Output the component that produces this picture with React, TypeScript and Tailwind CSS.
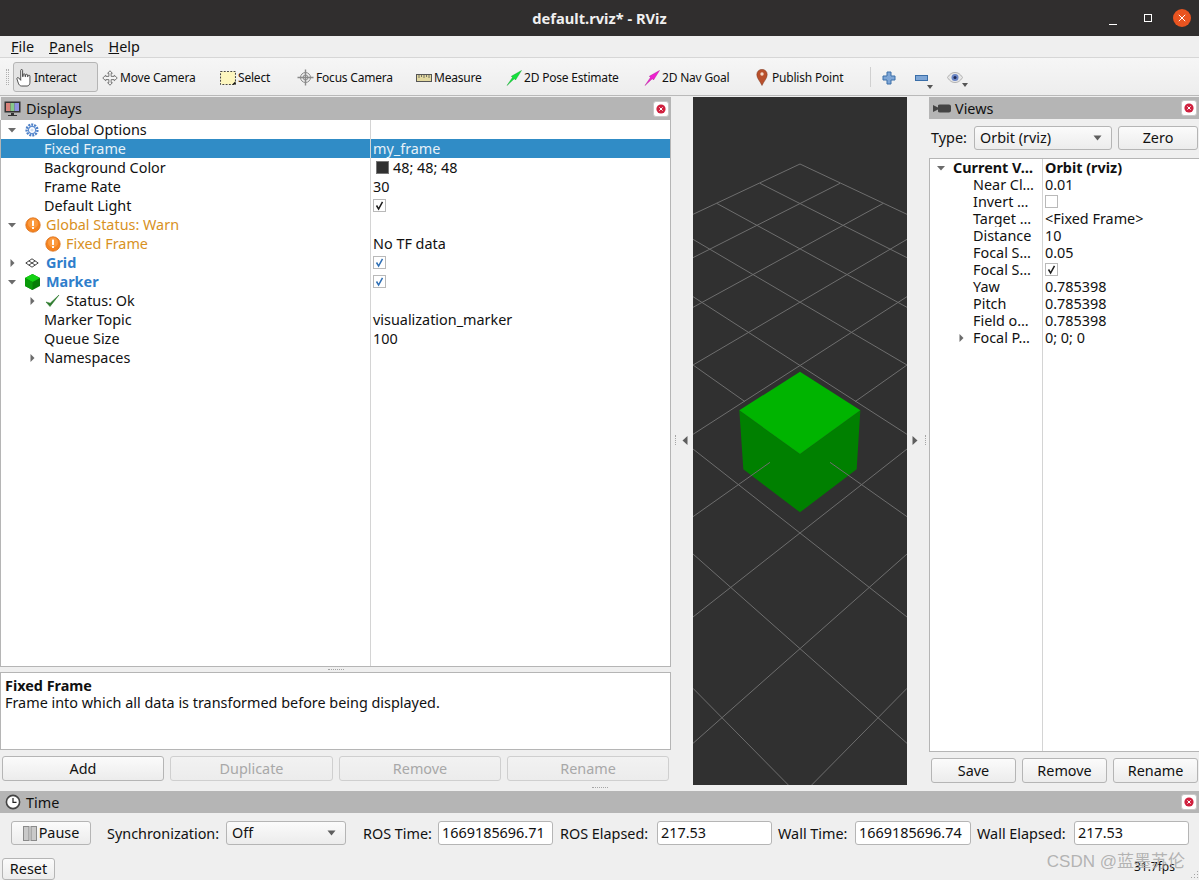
import React from 'react'

const FONT = 'font-["Noto_Sans","Open_Sans",sans-serif]'

// rviz style tree rows
type Row = {
  label: string
  level?: 0 | 1
  arrow?: 'down' | 'right'
  icon?: React.ReactNode
  tone?: 'warn' | 'link' | 'selected' | 'bold'
  value?: React.ReactNode
}

const Arrow = ({ dir }: { dir: 'down' | 'right' }) => (
  <svg width="10" height="10" viewBox="0 0 10 10" className="shrink-0">
    {dir === 'down' ? <path d="M1 3h8L5 7.5z" fill="#6b6b6b" /> : <path d="M3.5 1v8L7.5 5z" fill="#6b6b6b" />}
  </svg>
)

const Check = ({ on = true, blue = false }: { on?: boolean; blue?: boolean }) => (
  <span className="flex h-[13px] w-[13px] items-center justify-center border border-[#b9b9b9] bg-white">
    {on && (
      <svg width="11" height="11" viewBox="0 0 11 11">
        <path d="M2.5 5.5 4.6 9 8.5 1.8" fill="none" stroke={blue ? '#2f6fb5' : '#1c1c1c'} strokeWidth="1.5" />
      </svg>
    )}
  </span>
)

const GearIcon = () => (
  <svg width="14" height="14" viewBox="0 0 14 14">
    <circle cx="7" cy="7" r="5.4" fill="none" stroke="#4f81c7" strokeWidth="2.4" strokeDasharray="2 1" />
    <circle cx="7" cy="7" r="3.6" fill="none" stroke="#5f8fd2" strokeWidth="1.2" />
    <circle cx="7" cy="7" r="1.6" fill="#cfdcf2" />
  </svg>
)

const WarnIcon = () => (
  <svg width="16" height="16" viewBox="0 0 16 16">
    <circle cx="8" cy="8" r="7.2" fill="#f5831f" stroke="#d9701a" strokeWidth="0.8" />
    <circle cx="8" cy="6.5" r="5" fill="#fb9a3f" />
    <rect x="7" y="3.4" width="2" height="5.6" rx="0.6" fill="#fff" />
    <rect x="7" y="10" width="2" height="2" rx="0.5" fill="#fff" />
  </svg>
)

const GridIcon = () => (
  <svg width="14" height="10" viewBox="0 0 14 10">
    <path d="M7 .8 13.2 5 7 9.2.8 5zM3.9 2.9l6.2 4.2M10.1 2.9 3.9 7.1" fill="none" stroke="#444" strokeWidth="1" />
  </svg>
)

const CubeIcon = () => (
  <svg width="15" height="16" viewBox="0 0 15 16">
    <path d="M7.5 0 15 4v8l-7.5 4L0 12V4z" fill="#067d06" />
    <path d="M7.5 0 15 4 7.5 8 0 4z" fill="#14d214" />
    <path d="M0 4 7.5 8v8L0 12z" fill="#0a9a0a" />
  </svg>
)

const OkIcon = () => (
  <svg width="15" height="14" viewBox="0 0 15 14">
    <path d="M1 8 5 12.5 14 1 5.2 9.2z" fill="#2c7a2c" stroke="#2c7a2c" strokeWidth="0.6" />
  </svg>
)

const CloseBtn = () => (
  <button className="flex h-[16px] w-[16px] items-center justify-center rounded-[3px] border border-[#c9c9c9] bg-white">
    <svg width="10" height="10" viewBox="0 0 10 10">
      <circle cx="5" cy="5" r="4.6" fill="#d0213f" />
      <path d="M3.4 3.4l3.2 3.2M6.6 3.4 3.4 6.6" stroke="#fff" strokeWidth="1" />
    </svg>
  </button>
)

const PanelTitle = ({
  icon,
  title,
  className,
  iconClass = 'w-[26px]',
  titleClass = '',
}: {
  icon: React.ReactNode
  title: string
  className: string
  iconClass?: string
  titleClass?: string
}) => (
  <div className={`flex shrink-0 items-center bg-[#b5b5b5] text-[#111] ${className}`}>
    <span className={`flex shrink-0 items-center justify-center ${iconClass}`}>{icon}</span>
    <span className={`flex-1 text-[14.4px] ${titleClass}`}>{title}</span>
    <span className="mr-[2px]"><CloseBtn /></span>
  </div>
)

const Btn = ({ children, className, disabled }: { children: React.ReactNode; className: string; disabled?: boolean }) => (
  <button
    className={`flex items-center justify-center rounded-[3px] border bg-gradient-to-b text-[14.4px] ${
      disabled
        ? 'border-[#cfcfcf] from-[#f2f2f2] to-[#ececec] text-[#a8a8a8]'
        : 'border-[#b5b5b5] from-[#fbfbfb] to-[#ececec] text-[#111]'
    } ${className}`}
  >
    {children}
  </button>
)

const Combo = ({ text, className }: { text: string; className: string }) => (
  <div className={`flex items-center justify-between rounded-[3px] border border-[#b5b5b5] bg-gradient-to-b from-[#fbfbfb] to-[#ececec] pl-[5px] pr-[9px] text-[14.4px] text-[#111] ${className}`}>
    <span>{text}</span>
    <svg width="9" height="6" viewBox="0 0 9 6"><path d="M.5.5h8L4.500 5.500z" fill="#5e5e5e" /></svg>
  </div>
)

const TimeField = ({ value, className }: { value: string; className: string }) => (
  <div className={`flex h-[24px] items-center rounded-[3px] border border-[#b5b5b5] bg-white pl-[3px] text-[14.4px] text-[#111] ${className}`}>{value}</div>
)

const Tree = ({ rows, rowClass, leftClass }: { rows: Row[]; rowClass: string; leftClass: string }) => (
  <div className="flex h-full flex-col">
    {rows.map((r) => {
      const selected = r.tone === 'selected'
      const labelClass =
        r.tone === 'warn'
          ? 'text-[#d8911e]'
          : r.tone === 'link'
            ? 'font-bold text-[#2f7ecb]'
            : r.tone === 'bold'
              ? 'font-bold text-[#111]'
              : selected
                ? 'text-[#e6f1f8]'
                : 'text-[#111]'
      return (
        <div key={r.label + (r.value ? 'v' : '')} className={`flex shrink-0 items-center text-[14.4px] ${rowClass} ${selected ? 'bg-[#308cc6]' : ''}`}>
          <div className={`flex h-full shrink-0 items-center overflow-hidden whitespace-nowrap ${leftClass} ${r.level === 1 ? 'pl-[20px]' : ''}`}>
            <span className="flex w-[23px] shrink-0 items-center pl-[6px]">{r.arrow && <Arrow dir={r.arrow} />}</span>
            {r.icon && <span className="flex w-[22px] shrink-0 items-center pl-px">{r.icon}</span>}
            <span className={labelClass}>{r.label}</span>
          </div>
          <div className={`flex h-full flex-1 items-center whitespace-nowrap border-l border-[#d4d4d4] pl-[2px] ${r.tone === 'bold' ? 'font-bold text-[#111]' : selected ? 'text-[#e6f1f8]' : 'text-[#111]'}`}>
            {r.value}
          </div>
        </div>
      )
    })}
    {/* column line carries on below the last row */}
    <div className="flex flex-1">
      <div className={`shrink-0 ${leftClass}`} />
      <div className="flex-1 border-l border-[#d4d4d4]" />
    </div>
  </div>
)

const displayRows: Row[] = [
  { label: 'Global Options', arrow: 'down', icon: <GearIcon /> },
  { label: 'Fixed Frame', level: 1, tone: 'selected', value: 'my_frame' },
  {
    label: 'Background Color',
    level: 1,
    value: (
      <span className="flex items-center gap-[4px] pl-[3px]">
        <span className="h-[13px] w-[13px] border border-[#777] bg-[#303030]" />
        48; 48; 48
      </span>
    ),
  },
  { label: 'Frame Rate', level: 1, value: '30' },
  { label: 'Default Light', level: 1, value: <Check /> },
  { label: 'Global Status: Warn', arrow: 'down', icon: <WarnIcon />, tone: 'warn' },
  { label: 'Fixed Frame', level: 1, icon: <WarnIcon />, tone: 'warn', value: 'No TF data' },
  { label: 'Grid', arrow: 'right', icon: <GridIcon />, tone: 'link', value: <Check blue /> },
  { label: 'Marker', arrow: 'down', icon: <CubeIcon />, tone: 'link', value: <Check blue /> },
  { label: 'Status: Ok', level: 1, arrow: 'right', icon: <OkIcon /> },
  { label: 'Marker Topic', level: 1, value: 'visualization_marker' },
  { label: 'Queue Size', level: 1, value: '100' },
  { label: 'Namespaces', level: 1, arrow: 'right' },
]

const viewRows: Row[] = [
  { label: 'Current V…', arrow: 'down', tone: 'bold', value: 'Orbit (rviz)' },
  { label: 'Near Cl…', level: 1, value: '0.01' },
  { label: 'Invert …', level: 1, value: <Check on={false} /> },
  { label: 'Target …', level: 1, value: '<Fixed Frame>' },
  { label: 'Distance', level: 1, value: '10' },
  { label: 'Focal S…', level: 1, value: '0.05' },
  { label: 'Focal S… ', level: 1, value: <Check /> },
  { label: 'Yaw', level: 1, value: '0.785398' },
  { label: 'Pitch', level: 1, value: '0.785398' },
  { label: 'Field o…', level: 1, value: '0.785398' },
  { label: 'Focal P…', level: 1, arrow: 'right', value: '0; 0; 0' },
]

// floor grid, coords are 3x the viewport pixels
const gridLines = [
  [390, 207, 69, 358],
  [510, 265, 69, 488],
  [640, 325, 69, 637],
  [711, 433, 69, 810],
  [711, 605, 69, 1018],
  [711, 810, 555, 920],
  [300, 1102, 69, 1265],
  [711, 1062, 69, 1566],
  [711, 1377, 69, 1945],
  [711, 1780, 425, 2070],
]

const Viewport = () => (
  <div className="h-[688px] w-[214px] shrink-0 bg-[#303030]">
    <svg width="214" height="688" viewBox="69 6 642 2064" className="block">
      <path d="M208 946 390 1077 571 946 560 1123 390 1252 220 1123z" fill="#008000" />
      <path d="M390 830 571 946 390 1077 208 946z" fill="#00b400" />
      {gridLines.map(([a, b, c, d]) => (
        <g key={`${a}-${b}`} stroke="#6e6e6e" strokeWidth="3">
          <line x1={a} y1={b} x2={c} y2={d} />
          <line x1={780 - a} y1={b} x2={780 - c} y2={d} />
        </g>
      ))}
    </svg>
  </div>
)

const tools: { label: string; icon: React.ReactNode; className: string }[] = [
  {
    label: 'Move Camera',
    className: 'w-[118px]',
    icon: (
      <svg width="16" height="16" viewBox="0 0 17 17" fill="#f4f4f4" stroke="#6f6f6f">
        <path d="M8.500 .8 11 3.500H9.700v3.300h3.300V5.500l3.200 3-3.200 3V10.200H9.700v3.300H11l-2.500 2.700L6 13.500h1.300v-3.300H4v1.300L.8 8.500 4 5.500v1.300h3.300V3.500H6z" />
      </svg>
    ),
  },
  {
    label: 'Select',
    className: 'w-[77px]',
    icon: (
      <svg width="16" height="14" viewBox="0 0 17 15">
        <rect x=".5" y=".5" width="16" height="14" fill="#fdf6bf" stroke="#333" strokeDasharray="2 1.500" />
        <path d="M13 14.500 16.500 11v3.500z" fill="#111" />
      </svg>
    ),
  },
  {
    label: 'Focus Camera',
    className: 'w-[119px]',
    icon: (
      <svg width="17" height="17" viewBox="0 0 17 17" fill="none" stroke="#8a8a8a">
        <circle cx="8.500" cy="8.500" r="5" fill="#ededed" />
        <circle cx="8.500" cy="8.500" r="2.500" />
        <path d="M8.500 .5v16M.5 8.500h16" strokeWidth="1.400" />
      </svg>
    ),
  },
  {
    label: 'Measure',
    className: 'w-[90px]',
    icon: (
      <svg width="16" height="8" viewBox="0 0 16 8">
        <rect x=".5" y=".5" width="15" height="7" fill="#e3d9a0" stroke="#555" />
        <path d="M3 1v3M5.500 1v2M8 1v3M10.500 1v2M13 1v3" stroke="#555" strokeWidth="0.8" />
      </svg>
    ),
  },
  {
    label: '2D Pose Estimate',
    className: 'w-[138px]',
    icon: (
      <svg width="16" height="16" viewBox="0 0 16 16">
        <path d="M15.500 .5 9.500 10l-1.200-1.300L1 15.500 6.500 7.400 5.300 6.300z" fill="#14e23c" stroke="#0f9a2c" strokeWidth="0.4" />
      </svg>
    ),
  },
  {
    label: '2D Nav Goal',
    className: 'w-[111px]',
    icon: (
      <svg width="16" height="16" viewBox="0 0 16 16">
        <path d="M15.500 .5 9.500 10l-1.200-1.300L1 15.500 6.500 7.400 5.300 6.300z" fill="#f01fd0" stroke="#a8128f" strokeWidth="0.4" />
      </svg>
    ),
  },
  {
    label: 'Publish Point',
    className: 'w-[115px]',
    icon: (
      <svg width="12" height="17" viewBox="0 0 12 17" className="ml-px mr-[2px]">
        <path d="M6 16.500C4 12 .8 9.500.8 5.500a5.200 5.200 0 0 1 10.400 0C11.200 9.500 8 12 6 16.500z" fill="#b9502c" stroke="#7d3a22" strokeWidth="0.5" />
        <circle cx="6" cy="5" r="1.700" fill="#f3d9c9" />
      </svg>
    ),
  },
]

export default function App() {
  return (
    <div className={`relative flex h-[880px] w-[1199px] flex-col overflow-hidden bg-[#efefef] ${FONT}`}>
      {/* Title bar */}
      <div className="relative flex h-[36px] shrink-0 items-center justify-center bg-[#302e2e] text-[14.67px] font-bold text-[#f0f0f0]">
        default.rviz* - RViz
        <div className="absolute right-[8px] top-[9px] flex items-center">
          <span className="mr-[27px] mt-[12px] h-[1px] w-[8px] bg-white" />
          <span className="mr-[21px] h-[8px] w-[8px] border border-white" />
          <span className="flex h-[18px] w-[18px] items-center justify-center rounded-full bg-[#e95420]">
            <svg width="8" height="8" viewBox="0 0 8 8"><path d="M.8.8l6.400 6.400M7.200.8.800 7.200" stroke="#fff" strokeWidth="1" /></svg>
          </span>
        </div>
      </div>

      {/* Menu */}
      <div className="flex h-[22px] shrink-0 items-center gap-[15px] border-b border-[#d6d6d6] pl-[11px] text-[14.4px] text-[#111]">
        <span><u>F</u>ile</span>
        <span><u>P</u>anels</span>
        <span><u>H</u>elp</span>
      </div>

      {/* Toolbar */}
      <div className="flex h-[38px] shrink-0 items-center border-b border-[#b9b9b9] bg-gradient-to-b from-[#f6f6f6] to-[#ededed] text-[12px] tracking-[-0.2px] text-[#111]">
        <span className="ml-[6px] mr-[4px] h-[16px] w-[3px] border-x border-dotted border-[#b0b0b0]" />
        <div className="flex h-[30px] w-[85px] items-center gap-[2px] rounded-[3px] border border-[#b5b5b5] bg-[#e4e4e4] pl-[2px]">
          <svg width="16" height="18" viewBox="0 0 17 19" fill="#fff" stroke="#333" strokeWidth="0.9" className="mt-[2px]">
            <path d="M5 1.500a1 1 0 0 1 2 0V8h.6V6a1 1 0 0 1 2 0v2h.6V6.500a1 1 0 0 1 2 0V8h.6V7.500a1 1 0 0 1 2 0V14c0 2-1 4-3 4H6c-2 0-3-1.500-3.500-3L1 10.500c-.3-1.400 1-2 2-1L5 12z" />
          </svg>
          <span className="mt-[2px]">Interact</span>
        </div>
        <div className="ml-[4px] mt-[2px] flex items-center">
          {tools.map((t) => (
            <div key={t.label} className={`flex items-center gap-[2px] ${t.className}`}>
              {t.icon}
              <span className="whitespace-nowrap">{t.label}</span>
            </div>
          ))}
        </div>
        <span className="h-[20px] w-px bg-[#d0d0d0]" />
        <div className="ml-[11px] mt-[2px] flex items-center">
          <svg width="14" height="14" viewBox="0 0 14 14" className="mr-[19px]">
            <path d="M5 1h4v4h4v4H9v4H5V9H1V5h4z" fill="#7ea6d6" stroke="#3a6ea8" />
          </svg>
          <span className="relative mr-[19px]">
            <svg width="13" height="6" viewBox="0 0 13 6" className="block"><rect x=".5" y=".5" width="12" height="5" fill="#7ea6d6" stroke="#3a6ea8" /></svg>
            <svg width="6" height="4" viewBox="0 0 6 4" className="absolute -right-[5px] top-[10px]"><path d="M0 0h6L3 4z" fill="#555" /></svg>
          </span>
          <span className="relative">
            <svg width="16" height="11" viewBox="0 0 16 11" className="block">
              <path d="M.5 5.500C3 1.500 5.500.5 8 .5s5 1 7.500 5c-2.500 4-5 5-7.500 5s-5-1-7.500-5z" fill="#e6e6e6" stroke="#b0b0b0" />
              <circle cx="8" cy="5.500" r="3.500" fill="#6b86c6" />
              <circle cx="8" cy="5.500" r="1.500" fill="#1f2a55" />
            </svg>
            <svg width="6" height="4" viewBox="0 0 6 4" className="absolute -right-[5px] top-[11px]"><path d="M0 0h6L3 4z" fill="#555" /></svg>
          </span>
        </div>
      </div>

      {/* Main area */}
      <div className="relative mt-px flex h-[694px] shrink-0">
        {/* Displays */}
        <div className="flex w-[671px] shrink-0 flex-col">
          <PanelTitle
            className="ml-px h-[23px]"
            iconClass="w-[25px]"
            title="Displays"
            icon={
              <svg width="17" height="16" viewBox="0 0 17 16" className="-ml-[3px]">
                <rect x=".5" y=".5" width="16" height="11" fill="#333" />
                <rect x="2" y="2" width="4.500" height="8" fill="#d9827a" />
                <rect x="6.500" y="2" width="4" height="8" fill="#86c98a" />
                <rect x="10.500" y="2" width="4.500" height="8" fill="#8f93e0" />
                <path d="M7 12h3v2h3v1H4v-1h3z" fill="#333" />
              </svg>
            }
          />
          <div className="h-[547px] shrink-0 border border-t-0 border-[#b5b5b5] bg-white">
            <Tree rows={displayRows} rowClass="h-[19px]" leftClass="w-[369px]" />
          </div>
          <div className="flex h-[5px] shrink-0 items-center justify-center">
            <span className="h-px w-[16px] border-t border-dotted border-[#a5a5a5]" />
          </div>
          <div className="h-[78px] shrink-0 border border-[#b5b5b5] bg-white pl-[4px] pt-[4px] text-[14.4px] leading-[17px] text-[#111]">
            <div className="font-bold">Fixed Frame</div>
            <div>Frame into which all data is transformed before being displayed.</div>
          </div>
          <div className="mt-[6px] flex gap-[6px] pl-[2px]">
            <Btn className="h-[25px] w-[162px]">Add</Btn>
            <Btn disabled className="h-[25px] w-[163px]">Duplicate</Btn>
            <Btn disabled className="h-[25px] w-[162px]">Remove</Btn>
            <Btn disabled className="h-[25px] w-[162px]">Rename</Btn>
          </div>
        </div>

        {/* Middle with viewport */}
        <div className="flex w-[22px] shrink-0 items-center justify-between pb-[8px] pl-[4px] pr-[5px]">
          <span className="h-[10px] w-px border-l border-dotted border-[#a5a5a5]" />
          <svg width="6" height="9" viewBox="0 0 6 9"><path d="M5.500 0v9L.5 4.500z" fill="#5e5e5e" /></svg>
        </div>
        <Viewport />
        <div className="flex w-[22px] shrink-0 items-center justify-between pb-[8px] pl-[5px] pr-[3px]">
          <svg width="6" height="9" viewBox="0 0 6 9"><path d="M.5 0v9l5-4.500z" fill="#5e5e5e" /></svg>
          <span className="h-[10px] w-px border-l border-dotted border-[#a5a5a5]" />
        </div>

        {/* Views */}
        <div className="flex w-[270px] shrink-0 flex-col">
          <PanelTitle
            className="h-[22px]"
            titleClass="pt-[2px]"
            title="Views"
            icon={
              <svg width="18" height="9" viewBox="0 0 18 9">
                <path d="M0 1l5 2.500V1.500Q5 .5 7 .5h9Q18 .5 18 2.500v4q0 2-2 2H7Q5 8.500 5 7.500V5.500L0 8z" fill="#444" />
              </svg>
            }
          />
          <div className="mt-[7px] flex h-[24px] shrink-0 items-center pl-[2px] text-[14.4px] text-[#111]">
            <span className="-mt-px w-[43px]">Type:</span>
            <Combo text="Orbit (rviz)" className="h-[24px] w-[138px] pb-px" />
            <Btn className="ml-[6px] h-[24px] w-[80px]">Zero</Btn>
          </div>
          <div className="mt-[8px] h-[594px] shrink-0 border border-r-0 border-[#b5b5b5] bg-white">
            <Tree rows={viewRows} rowClass="h-[17px]" leftClass="w-[112px]" />
          </div>
          <div className="mt-[6px] flex gap-[6px] pl-[2px]">
            <Btn className="h-[25px] w-[85px]">Save</Btn>
            <Btn className="h-[25px] w-[85px]">Remove</Btn>
            <Btn className="h-[25px] w-[85px]">Rename</Btn>
          </div>
        </div>

        {/* splitter above the time panel */}
        <span className="absolute bottom-[3px] left-[592px] h-px w-[16px] border-t border-dotted border-[#a5a5a5]" />
      </div>

      {/* Time panel */}
      <PanelTitle
        className="h-[22px]"
        titleClass="pt-[2px]"
        title="Time"
        icon={
          <svg width="16" height="16" viewBox="0 0 16 16">
            <circle cx="8" cy="8" r="6.600" fill="#fff" stroke="#444" strokeWidth="1.600" />
            <path d="M8 4v4.300h3.500" fill="none" stroke="#222" strokeWidth="1.200" />
          </svg>
        }
      />
      <div className="mt-[8px] flex h-[24px] shrink-0 items-center pl-[11px] text-[14.4px] text-[#111]">
        <Btn className="h-[24px] w-[80px] gap-[2px]">
          <svg width="14" height="15" viewBox="0 0 14 15">
            <rect x=".5" y=".5" width="5.500" height="14" fill="#c9c9c9" stroke="#8a8a8a" />
            <rect x="8" y=".5" width="5.500" height="14" fill="#c9c9c9" stroke="#8a8a8a" />
          </svg>
          Pause
        </Btn>
        <span className="ml-[16px] w-[119px] whitespace-nowrap pt-[2px]">Synchronization:</span>
        <Combo text="Off" className="h-[24px] w-[120px]" />
        <span className="ml-[17px] w-[75px] whitespace-nowrap pt-[2px]">ROS Time:</span>
        <TimeField value="1669185696.71" className="w-[115px]" />
        <span className="ml-[7px] w-[97px] whitespace-nowrap pt-[2px]">ROS Elapsed:</span>
        <TimeField value="217.53" className="w-[115px]" />
        <span className="ml-[6px] w-[77px] whitespace-nowrap pt-[2px]">Wall Time:</span>
        <TimeField value="1669185696.74" className="w-[116px]" />
        <span className="ml-[6px] w-[97px] whitespace-nowrap pt-[2px]">Wall Elapsed:</span>
        <TimeField value="217.53" className="w-[115px]" />
      </div>
      <div className="mt-[13px] flex h-[22px] shrink-0 items-center justify-between pl-[2px] pr-[24px] text-[14.4px] text-[#111]">
        <Btn className="h-[22px] w-[53px]">Reset</Btn>
        <span className="-mt-[5px] text-[12px]">31.7fps</span>
      </div>

      {/* watermark and resize grip lie over the status row */}
      <div className='absolute bottom-[6px] right-[14px] whitespace-nowrap font-["Liberation_Sans","Noto_Sans_CJK_SC",sans-serif] text-[17px] text-[#a3a3a3]/80'>
        CSDN @蓝墨苏伦
      </div>
      <svg width="10" height="10" viewBox="0 0 10 10" className="absolute bottom-0 right-0" fill="#a5a5a5">
        <rect x="8" y="1" width="1" height="1" /><rect x="5" y="4" width="1" height="1" /><rect x="8" y="4" width="1" height="1" />
        <rect x="2" y="7" width="1" height="1" /><rect x="5" y="7" width="1" height="1" /><rect x="8" y="7" width="1" height="1" />
      </svg>
    </div>
  )
}
